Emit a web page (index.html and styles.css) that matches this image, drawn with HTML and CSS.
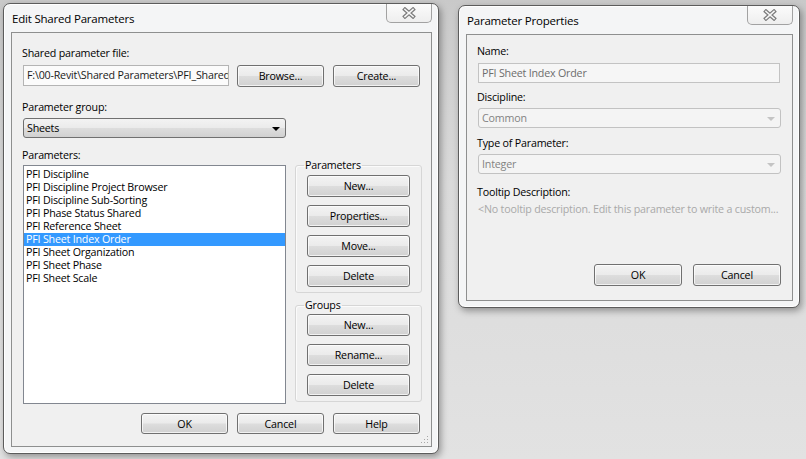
FILE: index.html
```html
<!DOCTYPE html>
<html>
<head>
<meta charset="utf-8">
<link rel="stylesheet" href="styles.css">
</head>
<body>
<div class="desktop">

  <div class="window win-edit">
    <div class="titlebar">
      <span class="title">Edit Shared Parameters</span>
      <span class="close">
        <svg width="14" height="12" viewBox="0 0 14 12"><path d="M3 2.5 L11 9.5 M11 2.5 L3 9.5" stroke="#7c7c7c" stroke-width="4" stroke-linecap="square" fill="none"/><path d="M3 2.5 L11 9.5 M11 2.5 L3 9.5" stroke="#f6f6f6" stroke-width="1.6" stroke-linecap="square" fill="none"/></svg>
      </span>
    </div>
    <div class="client client-edit">
      <div class="label lbl-file">Shared parameter file:</div>
      <div class="file-row">
        <div class="textbox file-box">F:\00-Revit\Shared Parameters\PFI_Shared Parameters.txt</div>
        <button class="btn btn-wide gap8">Browse...</button>
        <button class="btn btn-wide gap9">Create...</button>
      </div>
      <div class="label lbl-group">Parameter group:</div>
      <div class="combo combo-group">
        <span class="combo-text">Sheets</span>
        <span class="arrow"></span>
      </div>
      <div class="label lbl-params">Parameters:</div>
      <div class="main-row">
        <div class="listbox">
          <div class="item">PFI Discipline</div>
          <div class="item">PFI Discipline Project Browser</div>
          <div class="item">PFI Discipline Sub-Sorting</div>
          <div class="item">PFI Phase Status Shared</div>
          <div class="item">PFI Reference Sheet</div>
          <div class="item selected">PFI Sheet Index Order</div>
          <div class="item">PFI Sheet Organization</div>
          <div class="item">PFI Sheet Phase</div>
          <div class="item">PFI Sheet Scale</div>
        </div>
        <div class="side">
          <fieldset class="group group-params">
            <legend>Parameters</legend>
            <button class="btn btn-side">New...</button>
            <button class="btn btn-side">Properties...</button>
            <button class="btn btn-side">Move...</button>
            <button class="btn btn-side">Delete</button>
          </fieldset>
          <fieldset class="group group-groups">
            <legend>Groups</legend>
            <button class="btn btn-side">New...</button>
            <button class="btn btn-side">Rename...</button>
            <button class="btn btn-side">Delete</button>
          </fieldset>
        </div>
      </div>
      <div class="footer footer-edit">
        <button class="btn btn-wide btn-foot">OK</button>
        <button class="btn btn-wide btn-foot">Cancel</button>
        <button class="btn btn-wide btn-foot">Help</button>
      </div>
      <svg class="grip" width="8" height="8" viewBox="0 0 8 8">
        <rect x="6" y="0" width="1" height="1" fill="#a8a8a8"/>
        <rect x="3" y="3" width="1" height="1" fill="#a8a8a8"/>
        <rect x="6" y="3" width="1" height="1" fill="#a8a8a8"/>
        <rect x="0" y="6" width="1" height="1" fill="#a8a8a8"/>
        <rect x="3" y="6" width="1" height="1" fill="#a8a8a8"/>
        <rect x="6" y="6" width="1" height="1" fill="#a8a8a8"/>
      </svg>
    </div>
  </div>

  <div class="window win-props">
    <div class="titlebar">
      <span class="title">Parameter Properties</span>
      <span class="close">
        <svg width="14" height="12" viewBox="0 0 14 12"><path d="M3 2.5 L11 9.5 M11 2.5 L3 9.5" stroke="#7c7c7c" stroke-width="4" stroke-linecap="square" fill="none"/><path d="M3 2.5 L11 9.5 M11 2.5 L3 9.5" stroke="#f6f6f6" stroke-width="1.6" stroke-linecap="square" fill="none"/></svg>
      </span>
    </div>
    <div class="client client-props">
      <div class="label p-name">Name:</div>
      <div class="textbox disabled p-namebox">PFI Sheet Index Order</div>
      <div class="label p-disc">Discipline:</div>
      <div class="combo disabled-combo p-combo">
        <span class="combo-text">Common</span>
        <span class="arrow arrow-light"></span>
      </div>
      <div class="label p-type">Type of Parameter:</div>
      <div class="combo disabled-combo p-combo">
        <span class="combo-text">Integer</span>
        <span class="arrow arrow-light"></span>
      </div>
      <div class="label p-tip">Tooltip Description:</div>
      <div class="tip-text">&lt;No tooltip description. Edit this parameter to write a custom...</div>
      <div class="footer footer-props">
        <button class="btn btn-props">OK</button>
        <button class="btn btn-props">Cancel</button>
      </div>
    </div>
  </div>

</div>
</body>
</html>
```

FILE: styles.css
```css
html, body {
  margin: 0;
  padding: 0;
}
body {
  width: 806px;
  height: 459px;
  overflow: hidden;
  font-family: "Open Sans", "Noto Sans", sans-serif;
  font-size: 10.7px;
  letter-spacing: -0.2px;
  color: #000;
}
.desktop {
  position: relative;
  width: 806px;
  height: 459px;
  background: linear-gradient(#c9c9c9 0%, #dadada 40%, #e2e2e2 100%);
}
.window {
  position: absolute;
  box-sizing: border-box;
  border: 1px solid #5c5c5c;
  border-radius: 7px;
  background: #f4f5f6;
  box-shadow: 2px 3px 7px rgba(0, 0, 0, 0.35), inset 0 0 0 1px #ffffff;
  display: flex;
  flex-direction: column;
  padding: 0 6px 6px 7px;
}
.win-edit {
  left: 3px;
  top: 3px;
  width: 436px;
  height: 451px;
}
.win-props {
  left: 458px;
  top: 5px;
  width: 342px;
  height: 303px;
}
.titlebar {
  height: 28px;
  display: flex;
  justify-content: space-between;
  align-items: flex-start;
  flex: none;
}
.title {
  padding-top: 6px;
  padding-left: 1px;
  line-height: 17px;
  font-size: 11.5px;
  letter-spacing: -0.2px;
  color: #000;
}
.close {
  box-sizing: border-box;
  width: 46px;
  height: 19px;
  border: 1px solid #a2a2a2;
  border-top: none;
  border-radius: 0 0 5px 5px;
  background: linear-gradient(#fbfbfb, #eeeeee);
  display: flex;
  align-items: center;
  justify-content: center;
}
.client {
  position: relative;
  flex: 1;
  border: 1px solid #8e8f8f;
  background: #f0f0f0;
  display: flex;
  flex-direction: column;
}
.client-edit {
  padding: 13px 11px 0 11px;
}
.client-props {
  padding: 9px 12px 0 11px;
}
.label {
  line-height: 14px;
  height: 14px;
  margin-left: -1px;
  white-space: nowrap;
}
.file-row {
  display: flex;
  margin-top: 5px;
  height: 22px;
}
.textbox {
  box-sizing: border-box;
  height: 21px;
  border: 1px solid #abadb3;
  background: #fff;
  padding: 0 3px;
  line-height: 19px;
  white-space: nowrap;
  overflow: hidden;
}
.file-box {
  flex: 1;
  min-width: 0;
  border-color: #b4b4b4;
  background: #fbfbfb;
  color: #1a1a1a;
}
.btn {
  box-sizing: border-box;
  height: 22px;
  border: 1px solid #707070;
  border-radius: 3px;
  background: linear-gradient(#f3f3f3 0%, #ebebeb 48%, #dddddd 52%, #d1d1d1 100%);
  box-shadow: inset 0 0 0 1px rgba(255, 255, 255, 0.7);
  font-family: "Open Sans", "Noto Sans", sans-serif;
  font-size: 10.7px;
  letter-spacing: -0.2px;
  color: #000;
  padding: 0;
  line-height: 18px;
  flex: none;
}
.btn-wide {
  width: 87px;
}
.gap8 { margin-left: 8px; }
.gap9 { margin-left: 9px; }
.lbl-group { margin-top: 13px; }
.combo {
  box-sizing: border-box;
  height: 20px;
  border: 1px solid #707070;
  border-radius: 3px;
  display: flex;
  align-items: center;
  justify-content: space-between;
  padding: 0 5px 0 3px;
}
.combo-group {
  width: 263px;
  margin-top: 4px;
  background: linear-gradient(#f3f3f3 0%, #ebebeb 48%, #dddddd 52%, #d1d1d1 100%);
}
.arrow {
  width: 0;
  height: 0;
  border-left: 4px solid transparent;
  border-right: 4px solid transparent;
  border-top: 4px solid #000;
  margin-top: 1px;
}
.arrow-light {
  border-top-color: #c4c4c4;
}
.lbl-params { margin-top: 10px; }
.main-row {
  display: flex;
  align-items: flex-start;
  margin-top: -4px;
}
.listbox {
  box-sizing: border-box;
  width: 263px;
  height: 239px;
  margin-top: 7px;
  border: 1px solid #828790;
  background: #fff;
  padding-top: 2px;
}
.item {
  line-height: 13px;
  height: 13px;
  padding-left: 2px;
  white-space: nowrap;
}
.item.selected {
  background: #3399ff;
  color: #fff;
}
.side {
  width: 127px;
  margin-left: 9px;
  margin-right: -2px;
  display: flex;
  flex-direction: column;
}
.group {
  margin: 0;
  border: 1px solid #d6d6d6;
  border-radius: 3px;
  display: flex;
  flex-direction: column;
  gap: 8px;
  min-width: 0;
  box-shadow: inset 1px 1px 0 #fbfbfb;
}
.group legend {
  padding: 0 1px;
  margin-left: -3px;
  line-height: 14px;
}
.group-params {
  padding: 3px 12px 5px 11px;
}
.group-groups {
  margin-top: 5px;
  padding: 2px 12px 5px 11px;
}
.btn-side {
  width: 103px;
}
.footer {
  display: flex;
  justify-content: flex-end;
}
.footer-edit {
  margin-top: 9px;
  gap: 9px;
}
.btn-foot {
  height: 21px;
}
.grip {
  position: absolute;
  right: 2px;
  bottom: 2px;
}
.disabled {
  background: #f6f6f6;
  border-color: #c3c3c3;
  color: #6d6d6d;
}
.p-namebox {
  margin-top: 5px;
  height: 20px;
  line-height: 18px;
}
.p-disc { margin-top: 7px; }
.p-type { margin-top: 8px; }
.p-tip { margin-top: 11px; }
.disabled-combo {
  margin-top: 4px;
  background: #f4f4f4;
  border-color: #c2c2c2;
  color: #838383;
  margin-right: -1px;
}
.tip-text {
  margin-top: 3px;
  line-height: 14px;
  color: #a9a9a9;
  white-space: nowrap;
  overflow: hidden;
}
.footer-props {
  margin-top: 48px;
  gap: 11px;
  margin-right: -1px;
}
.btn-props {
  width: 88px;
}
```
